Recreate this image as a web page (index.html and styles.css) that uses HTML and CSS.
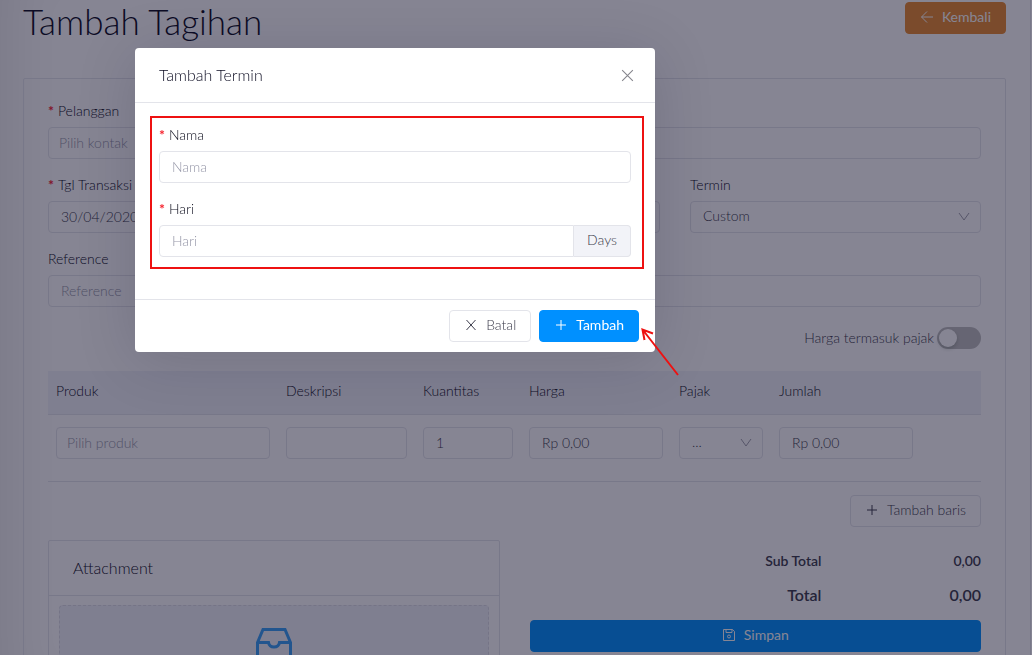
FILE: index.html
```html
<!DOCTYPE html>
<html lang="id">
<head>
    <meta charset="UTF-8">
    <meta name="viewport" content="width=device-width, initial-scale=1.0">
    <title>Tambah Tagihan</title>
    <link rel="stylesheet" href="styles.css">
</head>
<body>
    <main class="halaman">
        <header class="judul">
            <h1>Tambah Tagihan</h1>
            <a class="tombol tombol_kembali" href="#">
                <svg class="ikon" viewBox="0 0 14 14"><path d="M13 7H1.5M7 1.5L1.5 7L7 12.5"/></svg>
                Kembali
            </a>
        </header>

        <form class="kartu">
            <div class="baris_form">
                <div class="item">
                    <label class="wajib" for="pelanggan">Pelanggan</label>
                    <input class="kotak kotak_cari" id="pelanggan" type="text" placeholder="Pilih kontak">
                </div>
            </div>
            <div class="baris_form">
                <div class="item">
                    <label class="wajib" for="tgl_transaksi">Tgl Transaksi</label>
                    <input class="kotak" id="tgl_transaksi" type="text" value="30/04/2020">
                </div>
                <div class="item">
                    <label class="wajib" for="tgl_tempo">Tgl Jatuh Tempo</label>
                    <input class="kotak" id="tgl_tempo" type="text" value="30/04/2020">
                </div>
                <div class="item">
                    <label for="termin">Termin</label>
                    <div class="pilihan">
                        <select class="kotak" id="termin"><option>Custom</option></select>
                        <svg class="panah" viewBox="0 0 12 12"><path d="M1 2L6 9L11 2"/></svg>
                    </div>
                </div>
            </div>
            <div class="baris_form">
                <div class="item">
                    <label for="reference">Reference</label>
                    <input class="kotak" id="reference" type="text" placeholder="Reference">
                </div>
            </div>

            <div class="pajak">
                <label for="termasuk_pajak">Harga termasuk pajak</label>
                <input class="saklar" id="termasuk_pajak" type="checkbox" role="switch">
            </div>

            <table class="tabel">
                <colgroup>
                    <col class="k_produk"><col class="k_deskripsi"><col class="k_kuantitas"><col class="k_harga"><col class="k_pajak"><col class="k_harga"><col>
                </colgroup>
                <thead>
                    <tr>
                        <th>Produk</th>
                        <th>Deskripsi</th>
                        <th>Kuantitas</th>
                        <th>Harga</th>
                        <th>Pajak</th>
                        <th>Jumlah</th>
                        <th></th>
                    </tr>
                </thead>
                <tbody>
                    <tr>
                        <td><input class="kotak kotak_cari" type="text" placeholder="Pilih produk" aria-label="Produk"></td>
                        <td><input class="kotak" type="text" aria-label="Deskripsi"></td>
                        <td><input class="kotak" type="text" value="1" aria-label="Kuantitas"></td>
                        <td><input class="kotak" type="text" value="Rp 0,00" aria-label="Harga"></td>
                        <td>
                            <div class="pilihan">
                                <select class="kotak" aria-label="Pajak"><option>...</option></select>
                                <svg class="panah" viewBox="0 0 12 12"><path d="M1 2L6 9L11 2"/></svg>
                            </div>
                        </td>
                        <td><input class="kotak" type="text" value="Rp 0,00" aria-label="Jumlah"></td>
                        <td></td>
                    </tr>
                </tbody>
            </table>

            <div class="tambah_baris">
                <button class="tombol" type="button">
                    <svg class="ikon" viewBox="0 0 14 14"><path d="M7 2V12M2 7H12"/></svg>
                    Tambah baris
                </button>
            </div>

            <div class="bawah">
                <section class="lampiran">
                    <h2>Attachment</h2>
                    <button class="unggah" type="button" aria-label="Attachment">
                        <svg viewBox="0 0 36 36"><path d="M1.500 15.500L7 2.500H29L34.500 15.500V33.500H1.500ZM1.500 15.500H12.500C13 18.500 15 20 18 20S23 18.500 23.500 15.500H34.500"/></svg>
                    </button>
                </section>
                <section class="ringkasan">
                    <dl>
                        <div class="sub"><dt>Sub Total</dt><dd>0,00</dd></div>
                        <div class="total"><dt>Total</dt><dd>0,00</dd></div>
                    </dl>
                    <button class="tombol tombol_utama" type="button">
                        <svg class="ikon" viewBox="0 0 14 14"><path d="M1.500 1.500H10.500L12.500 3.500V12.500H1.500ZM4 1.500V4.500H10V1.500"/><circle cx="7" cy="8.500" r="1.500"/></svg>
                        Simpan
                    </button>
                </section>
            </div>
        </form>
    </main>

    <div class="tirai">
        <div class="modal" role="dialog" aria-labelledby="judul_modal">
            <div class="modal_kepala">
                <h2 id="judul_modal">Tambah Termin</h2>
                <button class="tutup" type="button" aria-label="Tutup">
                    <svg viewBox="0 0 14 14"><path d="M2 2L12 12M12 2L2 12"/></svg>
                </button>
            </div>
            <form class="modal_isi">
                <div class="item">
                    <label class="wajib" for="nama">Nama</label>
                    <input class="kotak" id="nama" type="text" placeholder="Nama">
                </div>
                <div class="item">
                    <label class="wajib" for="hari">Hari</label>
                    <div class="grup">
                        <input class="kotak" id="hari" type="text" placeholder="Hari">
                        <span class="satuan">Days</span>
                    </div>
                </div>
            </form>
            <div class="modal_kaki">
                <button class="tombol" type="button">
                    <svg class="ikon" viewBox="0 0 14 14"><path d="M2.500 2L11.500 12M11.500 2L2.500 12"/></svg>
                    Batal
                </button>
                <button class="tombol tombol_utama" type="button">
                    <svg class="ikon" viewBox="0 0 14 14"><path d="M7 2V12M2 7H12"/></svg>
                    Tambah
                </button>
            </div>
            <!-- Penanda -->
            <div class="penanda"></div>
            <svg class="penanda_panah" viewBox="0 0 40 50"><path d="M38 48L2.500 2.500M4.500 13L2.500 2.500L13 6.500"/></svg>
        </div>
    </div>
</body>
</html>
```
FILE: styles.css
```css
* {
    box-sizing: border-box;
}

html, body {
    margin: 0;
    padding: 0;
    height: 100%;
    overflow: hidden;
    background-color: #fff;
}

body, input, select, button {
    font-family: Lato, "Liberation Sans", sans-serif;
    font-size: 14px;
    font-weight: 300;
    line-height: 20px;
    color: #3c3c4c;
}

h1, h2, dl, dd {
    margin: 0;
    font-weight: 300;
}

.halaman {
    height: 100%;
    overflow: hidden;
    margin-right: 1px;
    padding: 0 24px 0 23px;
    border-right: 1px solid #e3e4ea;
    box-shadow: inset 60px 0 60px -50px rgba(0, 0, 0, 0.1);
}

.judul {
    display: flex;
    justify-content: space-between;
    align-items: flex-start;
    height: 78px;
    padding-top: 2px;
}

h1 {
    font-size: 35px;
    line-height: 38px;
    color: #0c0c22;
}

.kartu {
    padding: 16px 24px 24px;
    border: 1px solid #e3e4ea;
    border-radius: 2px;
}

/* Formulario */
.baris_form {
    display: flex;
    gap: 30px;
}

.item {
    flex: 1;
    min-width: 0;
    margin-bottom: 10px;
}

.item label {
    display: block;
    line-height: 32px;
    color: #0c0c1c;
}

.wajib::before {
    content: "*";
    margin-right: 4px;
    font-weight: 700;
    color: #f5222d;
}

.kotak {
    display: block;
    width: 100%;
    height: 32px;
    padding: 0 12px 2px;
    border: 1px solid #e3e4ea;
    border-radius: 4px;
    background-color: transparent;
    appearance: none;
}

.kotak_cari {
    padding: 0 10px 2px;
}

.kotak::placeholder {
    color: #9697a8;
    opacity: 1;
}

.pilihan {
    position: relative;
}

.panah {
    position: absolute;
    top: 10px;
    right: 11px;
    width: 12px;
    height: 12px;
    fill: none;
    stroke: #a0a0ac;
    pointer-events: none;
}

.pajak {
    display: flex;
    justify-content: flex-end;
    align-items: center;
    gap: 3px;
    margin: 10px 0 22px;
    height: 22px;
}

.saklar {
    width: 44px;
    height: 22px;
    margin: 0;
    padding: 2px;
    border-radius: 11px;
    background-color: #bfbfbf;
    appearance: none;
}

.saklar::before {
    content: "";
    display: block;
    width: 18px;
    height: 18px;
    border-radius: 50%;
    background-color: #fff;
    box-shadow: 0 2px 4px rgba(0, 35, 11, 0.2);
}

/* Tabla */
.tabel {
    width: 100%;
    table-layout: fixed;
    border-collapse: separate;
    border-spacing: 0;
}

.k_produk { width: 230px; }
.k_deskripsi { width: 137px; }
.k_kuantitas { width: 106px; }
.k_harga { width: 150px; }
.k_pajak { width: 100px; }

.tabel th {
    height: 44px;
    padding: 0 8px 3px;
    text-align: left;
    font-weight: 300;
    color: #0c0c1c;
    background-color: #f1f2f8;
    border-bottom: 1px solid #e3e4ea;
}

.tabel td {
    padding: 12px 8px 22px;
    border-bottom: 1px solid #e3e4ea;
}

.tombol {
    display: flex;
    justify-content: center;
    align-items: center;
    gap: 8px;
    height: 32px;
    padding: 0 14px 2px;
    border: 1px solid #e3e4ea;
    border-radius: 4px;
    background-color: #fff;
    text-decoration: none;
    cursor: pointer;
}

.ikon {
    width: 14px;
    height: 14px;
    fill: none;
    stroke: currentColor;
}

.tombol_kembali,
.tombol_utama {
    font-weight: 400;
    color: #fff;
}

.tombol_kembali {
    background-color: #e88b30;
    border-color: #e88b30;
}

.tombol_utama {
    background-color: #0090ff;
    border-color: #0090ff;
}

.tambah_baris {
    display: flex;
    justify-content: flex-end;
    padding: 13px 0;
}

.bawah {
    display: grid;
    grid-template-columns: 1fr 1fr;
    gap: 30px;
}

.lampiran {
    border: 1px solid #e3e4ea;
    border-radius: 2px;
}

.lampiran h2 {
    padding: 0 24px;
    font-size: 16px;
    line-height: 54px;
    color: #0c0c22;
    border-bottom: 1px solid #e3e4ea;
}

.unggah {
    display: block;
    width: calc(100% - 20px);
    height: 140px;
    margin: 9px 10px 10px;
    padding: 0 0 60px;
    border: 1px dashed #dcdde5;
    border-radius: 4px;
    background-color: #f1f2f8;
}

.unggah svg {
    display: block;
    width: 36px;
    height: 36px;
    margin: 0 auto;
    fill: none;
    stroke: #369ef5;
    stroke-width: 3;
}

.ringkasan dl div {
    display: flex;
    justify-content: space-between;
    font-weight: 600;
}

.ringkasan dd {
    font-weight: 600;
}

.ringkasan dt {
    width: 292px;
    text-align: right;
}

.sub {
    padding: 11px 0 12px;
}

.total {
    padding: 2px 0 15px;
    font-size: 16px;
}

.ringkasan .tombol {
    width: 100%;
}

/* Modal */
.tirai {
    position: fixed;
    inset: 0;
    padding: 48px 0 0 135px;
    background-color: rgba(13, 11, 39, 0.5);
}

.modal {
    position: relative;
    width: 520px;
    border-radius: 4px;
    background-color: #fff;
    box-shadow: 0 7px 60px rgba(13, 11, 39, 0.15);
}

.modal_kepala {
    display: flex;
    justify-content: space-between;
    align-items: center;
    height: 55px;
    padding: 0 20px 0 24px;
    border-bottom: 1px solid #e3e4ea;
}

.modal_kepala h2 {
    font-size: 16px;
    color: #0c0c22;
}

.tutup {
    padding: 0;
    border: 0;
    background: none;
    cursor: pointer;
}

.tutup svg {
    display: block;
    width: 15px;
    height: 15px;
    fill: none;
    stroke: #85858c;
}

.modal_isi {
    padding: 16px 24px 32px;
}

.grup {
    display: flex;
}

.grup .kotak {
    border-radius: 4px 0 0 4px;
}

.satuan {
    padding: 4px 13px;
    border: 1px solid #e3e4ea;
    border-left: 0;
    border-radius: 0 4px 4px 0;
    background-color: #f2f3f8;
}

.modal_kaki {
    display: flex;
    justify-content: flex-end;
    gap: 8px;
    padding: 10px 16px;
    border-top: 1px solid #e3e4ea;
}

.penanda {
    position: absolute;
    top: 68px;
    left: 15px;
    right: 11px;
    height: 153px;
    border: 2px solid #ee1111;
    pointer-events: none;
}

.penanda_panah {
    position: absolute;
    top: 279px;
    left: 505px;
    width: 40px;
    height: 50px;
    fill: none;
    stroke: #ee1111;
    stroke-width: 2;
    pointer-events: none;
}
```
